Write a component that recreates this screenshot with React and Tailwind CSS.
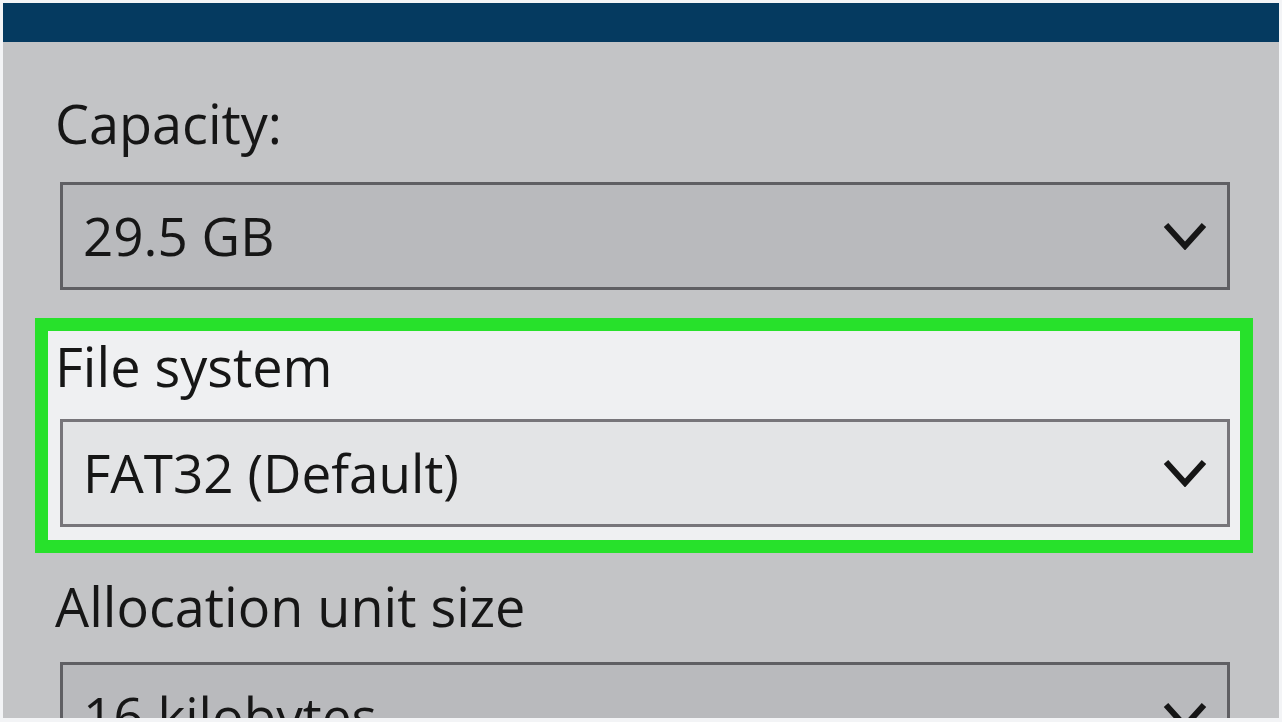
import React from "react";

const font = { fontFamily: '"Open Sans", "Noto Sans", sans-serif' };

function Chevron() {
  return (
    <svg width="44" height="28" viewBox="0 0 44 28" className="shrink-0">
      <polyline points="3,3 22,24 41,3" fill="none" stroke="#161616" strokeWidth="6" strokeLinejoin="miter" />
    </svg>
  );
}

function Select({ value, light }) {
  return (
    <div
      className={
        "h-[108px] flex items-center justify-between pl-[20px] pr-[20px] border-[3px] " +
        (light ? "bg-[#e3e4e6] border-[#77757a]" : "bg-[#b9babd] border-[#5f5f63]")
      }
    >
      <span className="text-[53px] leading-[60px] text-[#161616]">{value}</span>
      <Chevron />
    </div>
  );
}

export default function App() {
  return (
    <div className="w-[1282px] h-[722px] bg-[#f3f4f6] pt-[3px] px-[3px] pb-[4px] overflow-hidden" style={font}>
      <div className="h-full flex flex-col bg-[#c3c4c6] overflow-hidden">
        <div className="h-[39px] shrink-0 bg-[#053a60]" />
        <div className="flex flex-col pl-[32px] pr-[26px]">
          <div className="mt-[51px] ml-[20px] text-[54px] leading-[60px] text-[#161616]">Capacity:</div>
          <div className="mt-[29px] ml-[25px] mr-[23px]">
            <Select value="29.5 GB" />
          </div>
          <div className="mt-[28px] border-[13px] border-[#27e12b] bg-[#eff0f2] pt-[5px] pb-[13px]">
            <div className="ml-[7px] text-[54px] leading-[60px] text-[#161616]">File system</div>
            <div className="mt-[23px] ml-[12px] mr-[10px]">
              <Select value="FAT32 (Default)" light />
            </div>
          </div>
          <div className="mt-[23px] ml-[20px] text-[54px] leading-[60px] text-[#161616]">Allocation unit size</div>
          <div className="mt-[26px] ml-[25px] mr-[23px]">
            <Select value="16 kilobytes" />
          </div>
        </div>
      </div>
    </div>
  );
}
